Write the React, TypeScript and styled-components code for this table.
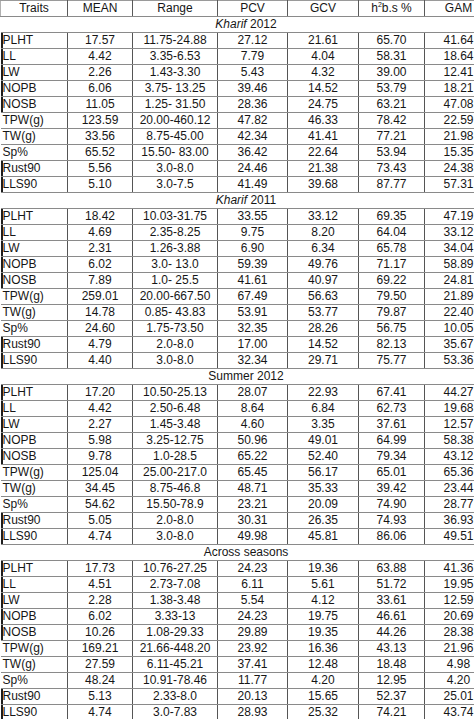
import React, { FC } from "react";
import styled, { createGlobalStyle } from "styled-components";

const GlobalStyle = createGlobalStyle`
  html, body {
    margin: 0;
    padding: 0;
    overflow: hidden;
    background: #ffffff;
  }
`;

const Page = styled.div`
  width: 474px;
  height: 719px;
  overflow: hidden;
  background: #ffffff;
`;

// The last column runs past the right edge of the shot, so it is clipped at 50px
// while its content is laid out as if the column were 67px wide.
const Table = styled.table`
  width: 474px;
  table-layout: fixed;
  border-collapse: collapse;
  font-family: "Liberation Sans", Arial, sans-serif;
  font-size: 12px;
  color: #161616;
`;

const Row = styled.tr`
  height: 16px;
`;

const Col = styled.col<{ $w: number }>`
  width: ${(p) => p.$w}px;
`;

const HeadCell = styled.th`
  font-weight: normal;
  padding: 0;
  height: 15px;
  line-height: 15px;
  text-align: center;
  white-space: nowrap;
  overflow: hidden;
  border-top: 1px solid #9a9a9a;
  border-bottom: 1px solid #8a8a8a;
  border-left: 1px solid #5a5a5a;
  border-right: 1px solid #5a5a5a;
  &:first-child {
    border-left-color: #b0b0b0;
  }
  &:last-child {
    border-right: none;
    text-align: left;
  }
  sup {
    font-size: 7px;
    line-height: 0;
    vertical-align: 5px;
  }
`;

const SectionCell = styled.td`
  padding: 0 0 0 17px;
  height: 15px;
  line-height: 15px;
  text-align: center;
  white-space: nowrap;
  border-top: 1px solid #8a8a8a;
  border-bottom: 1px solid #8a8a8a;
  border-left: none;
  border-right: none;
  em {
    font-style: italic;
  }
`;

const Cell = styled.td`
  padding: 0;
  height: 15px;
  line-height: 15px;
  text-align: center;
  white-space: nowrap;
  overflow: hidden;
  border-top: 1px solid #8a8a8a;
  border-bottom: 1px solid #8a8a8a;
  border-left: 1px solid #555555;
  border-right: 1px solid #555555;
  &:last-child {
    border-right: none;
    text-align: left;
  }
`;

const TraitCell = styled(Cell)<{ $stem: boolean }>`
  text-align: left;
  padding-left: 2px;
  border-left: none;
  box-shadow: ${(p) => (p.$stem ? "inset 2px 0 0 #1e1e1e" : "none")};
`;

const FullWidth = styled.span`
  display: inline-block;
  width: 67px;
  text-align: center;
`;

type DataRow = [string, string, string, string, string, string, string];

interface Section {
  title: React.ReactNode;
  rows: DataRow[];
}

const sections: Section[] = [
  {
    title: (
      <>
        <em>Kharif</em> 2012
      </>
    ),
    rows: [
      ["PLHT", "17.57", "11.75-24.88", "27.12", "21.61", "65.70", "41.64"],
      ["LL", "4.42", "3.35-6.53", "7.79", "4.04", "58.31", "18.64"],
      ["LW", "2.26", "1.43-3.30", "5.43", "4.32", "39.00", "12.41"],
      ["NOPB", "6.06", "3.75- 13.25", "39.46", "14.52", "53.79", "18.21"],
      ["NOSB", "11.05", "1.25- 31.50", "28.36", "24.75", "63.21", "47.08"],
      ["TPW(g)", "123.59", "20.00-460.12", "47.82", "46.33", "78.42", "22.59"],
      ["TW(g)", "33.56", "8.75-45.00", "42.34", "41.41", "77.21", "21.98"],
      ["Sp%", "65.52", "15.50- 83.00", "36.42", "22.64", "53.94", "15.35"],
      ["Rust90", "5.56", "3.0-8.0", "24.46", "21.38", "73.43", "24.38"],
      ["LLS90", "5.10", "3.0-7.5", "41.49", "39.68", "87.77", "57.31"],
    ],
  },
  {
    title: (
      <>
        <em>Kharif</em> 2011
      </>
    ),
    rows: [
      ["PLHT", "18.42", "10.03-31.75", "33.55", "33.12", "69.35", "47.19"],
      ["LL", "4.69", "2.35-8.25", "9.75", "8.20", "64.04", "33.12"],
      ["LW", "2.31", "1.26-3.88", "6.90", "6.34", "65.78", "34.04"],
      ["NOPB", "6.02", "3.0- 13.0", "59.39", "49.76", "71.17", "58.89"],
      ["NOSB", "7.89", "1.0- 25.5", "41.61", "40.97", "69.22", "24.81"],
      ["TPW(g)", "259.01", "20.00-667.50", "67.49", "56.63", "79.50", "21.89"],
      ["TW(g)", "14.78", "0.85- 43.83", "53.91", "53.77", "79.87", "22.40"],
      ["Sp%", "24.60", "1.75-73.50", "32.35", "28.26", "56.75", "10.05"],
      ["Rust90", "4.79", "2.0-8.0", "17.00", "14.52", "82.13", "35.67"],
      ["LLS90", "4.40", "3.0-8.0", "32.34", "29.71", "75.77", "53.36"],
    ],
  },
  {
    title: "Summer 2012",
    rows: [
      ["PLHT", "17.20", "10.50-25.13", "28.07", "22.93", "67.41", "44.27"],
      ["LL", "4.42", "2.50-6.48", "8.64", "6.84", "62.73", "19.68"],
      ["LW", "2.27", "1.45-3.48", "4.60", "3.35", "37.61", "12.57"],
      ["NOPB", "5.98", "3.25-12.75", "50.96", "49.01", "64.99", "58.38"],
      ["NOSB", "9.78", "1.0-28.5", "65.22", "52.40", "79.34", "43.12"],
      ["TPW(g)", "125.04", "25.00-217.0", "65.45", "56.17", "65.01", "65.36"],
      ["TW(g)", "34.45", "8.75-46.8", "48.71", "35.33", "39.42", "23.44"],
      ["Sp%", "54.62", "15.50-78.9", "23.21", "20.09", "74.90", "28.77"],
      ["Rust90", "5.05", "2.0-8.0", "30.31", "26.35", "74.93", "36.93"],
      ["LLS90", "4.74", "3.0-8.0", "49.98", "45.81", "86.06", "49.51"],
    ],
  },
  {
    title: "Across seasons",
    rows: [
      ["PLHT", "17.73", "10.76-27.25", "24.23", "19.36", "63.88", "41.36"],
      ["LL", "4.51", "2.73-7.08", "6.11", "5.61", "51.72", "19.95"],
      ["LW", "2.28", "1.38-3.48", "5.54", "4.12", "33.61", "12.59"],
      ["NOPB", "6.02", "3.33-13", "24.23", "19.75", "46.61", "20.69"],
      ["NOSB", "10.26", "1.08-29.33", "29.89", "19.35", "44.26", "28.38"],
      ["TPW(g)", "169.21", "21.66-448.20", "23.92", "16.36", "43.13", "21.96"],
      ["TW(g)", "27.59", "6.11-45.21", "37.41", "12.48", "18.48", "4.98"],
      ["Sp%", "48.24", "10.91-78.46", "11.77", "4.20", "12.95", "4.20"],
      ["Rust90", "5.13", "2.33-8.0", "20.13", "15.65", "52.37", "25.01"],
      ["LLS90", "4.74", "3.0-7.83", "28.93", "25.32", "74.21", "43.74"],
    ],
  },
];

const widths = [67, 65, 85, 70, 71, 66, 50];

const hasStem = (name: string) => /^[PLNR]/.test(name);

const App: FC = () => {
  return (
    <Page>
      <GlobalStyle />
      <Table>
        <colgroup>
          {widths.map((w, i) => (
            <Col key={i} $w={w} />
          ))}
        </colgroup>
        <thead>
          <Row>
            <HeadCell>Traits</HeadCell>
            <HeadCell>MEAN</HeadCell>
            <HeadCell>Range</HeadCell>
            <HeadCell>PCV</HeadCell>
            <HeadCell>GCV</HeadCell>
            <HeadCell>
              h<sup>2</sup>b.s %
            </HeadCell>
            <HeadCell>
              <FullWidth>GAM</FullWidth>
            </HeadCell>
          </Row>
        </thead>
        {sections.map((section, si) => (
          <tbody key={si}>
            <Row>
              <SectionCell colSpan={7}>{section.title}</SectionCell>
            </Row>
            {section.rows.map((row) => (
              <Row key={row[0]}>
                <TraitCell $stem={hasStem(row[0])}>{row[0]}</TraitCell>
                {row.slice(1, 6).map((value, ci) => (
                  <Cell key={ci}>{value}</Cell>
                ))}
                <Cell>
                  <FullWidth>{row[6]}</FullWidth>
                </Cell>
              </Row>
            ))}
          </tbody>
        ))}
      </Table>
    </Page>
  );
};

export default App;
